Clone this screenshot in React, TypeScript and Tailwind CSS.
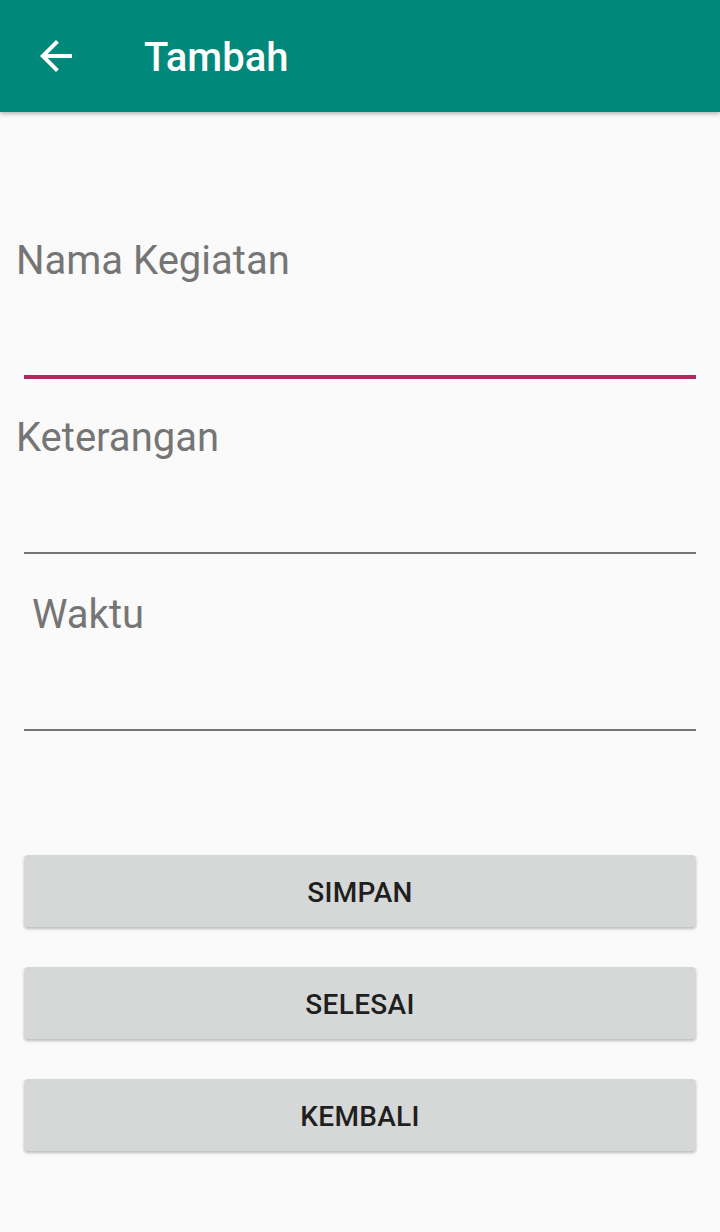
import React from "react";

const fields = [
  { label: "Nama Kegiatan", focused: true, indent: "pl-[16px]" },
  { label: "Keterangan", focused: false, indent: "pl-[16px]" },
  { label: "Waktu", focused: false, indent: "pl-[32px]" },
];

const buttons = ["SIMPAN", "SELESAI", "KEMBALI"];

function ArrowBack() {
  return (
    <svg viewBox="0 0 24 24" className="w-[48px] h-[48px]" fill="#ffffff">
      <path d="M20 11H7.83l5.59-5.59L12 4l-8 8 8 8 1.41-1.41L7.83 13H20v-2z" />
    </svg>
  );
}

export default function App() {
  return (
    <div className="min-h-[1232px] w-[720px] bg-[#fafafa] font-['Roboto',sans-serif]">
      {/* App bar */}
      <header className="h-[112px] bg-[#00887a] flex items-center shadow-[0_2px_4px_rgba(0,0,0,0.28)] relative z-10">
        <div className="w-[144px] pl-[32px] flex items-center">
          <ArrowBack />
        </div>
        <h1 className="text-white text-[40px] leading-[48px] font-medium pt-[4px]">Tambah</h1>
      </header>

      {/* Form */}
      <main className="pt-[125px]">
        {fields.map((f) => (
          <div key={f.label} className="h-[177px]">
            <div className={`h-[48px] leading-[48px] text-[40px] text-[#757575] ${f.indent}`}>
              {f.label}
            </div>
            <div className="h-[90px]" />
            <div className="mx-[24px] h-[4px]">
              {f.focused ? (
                <div className="h-[4px] bg-[#b0285f]" />
              ) : (
                <div className="h-[2px] bg-[#757575]" />
              )}
            </div>
          </div>
        ))}

        <div className="pt-[87px] px-[24px] flex flex-col gap-[40px]">
          {buttons.map((b) => (
            <button
              key={b}
              className="h-[72px] w-full pt-[3px] rounded-[4px] bg-[#d6d7d7] shadow-[0_2px_3px_rgba(0,0,0,0.25)] text-[28px] font-medium tracking-[0.3px] text-[#1f1f1f]"
            >
              {b}
            </button>
          ))}
        </div>
      </main>
    </div>
  );
}
